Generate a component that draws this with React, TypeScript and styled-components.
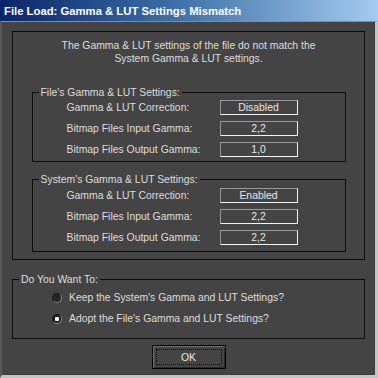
import React from "react";
import styled, { createGlobalStyle } from "styled-components";

const GlobalStyle = createGlobalStyle`
  html, body {
    margin: 0;
    padding: 0;
    background: #444444;
  }
  body {
    font-family: "Liberation Sans", Arial, sans-serif;
    font-size: 10.4px;
    color: #dedede;
  }
`;

const Window = styled.div`
  width: 378px;
  height: 378px;
  display: flex;
  flex-direction: column;
  background: #444444;
  overflow: hidden;
`;

const TitleBar = styled.div`
  height: 21px;
  flex: none;
  display: flex;
  align-items: center;
  padding-left: 4px;
  background: linear-gradient(to right, #0a246a 0%, #3a6ea5 45%, #a6caf0 100%);
  color: #ffffff;
  font-weight: bold;
  font-size: 11.3px;
`;

const Body = styled.div`
  flex: 1;
  display: flex;
  flex-direction: column;
  align-items: flex-start;
  padding: 9px 10px 4px 10px;
  border-top: 1px solid #8a8a8a;
  border-left: 2px solid #585858;
  border-right: 3px solid #c4c4c4;
  border-bottom: 3px solid #c4c4c4;
  box-shadow: inset -1px -1px 0 #3a3a3a;
`;

const Panel = styled.div<{ $height: number }>`
  position: relative;
  width: 353px;
  height: ${({ $height }) => $height}px;
  box-sizing: border-box;
  border: 1px solid #0c0c0c;
  display: flex;
  flex-direction: column;
  align-items: center;
`;

const Caption = styled.span`
  position: absolute;
  top: -7px;
  left: 6px;
  padding: 0 2px;
  line-height: 13px;
  background: #444444;
  color: #dedede;
  white-space: nowrap;
`;

const Message = styled.p`
  margin: 7px 0 27px 0;
  line-height: 13px;
  text-align: center;
`;

const Group = styled.div<{ $padTop: number; $padBottom: number }>`
  position: relative;
  width: 314px;
  box-sizing: border-box;
  border: 1px solid #0c0c0c;
  padding: ${({ $padTop, $padBottom }) => `${$padTop}px 0 ${$padBottom}px 34px`};
  display: grid;
  grid-template-columns: 153px 78px;
  row-gap: 6px;
  margin-bottom: 17px;
  &:last-of-type {
    margin-bottom: 0;
  }
`;

const Label = styled.span`
  line-height: 15px;
  white-space: nowrap;
`;

const Value = styled.span`
  height: 15px;
  box-sizing: border-box;
  border-top: 1px solid #9a9a9a;
  border-left: 1px solid #9a9a9a;
  border-right: 1px solid #f4f4f4;
  border-bottom: 1px solid #f4f4f4;
  text-align: center;
  line-height: 13px;
  color: #e8e8e8;
`;

const Choices = styled.div`
  margin-top: 19px;
  width: 353px;
  height: 60px;
  box-sizing: border-box;
  position: relative;
  border: 1px solid #0c0c0c;
  padding: 11px 0 0 39px;
  display: flex;
  flex-direction: column;
  gap: 8px;
`;

const Option = styled.label`
  display: flex;
  align-items: center;
  gap: 7px;
  line-height: 13px;
  white-space: nowrap;
`;

const Radio = styled.span<{ $checked?: boolean }>`
  width: 10px;
  height: 10px;
  box-sizing: border-box;
  border-radius: 50%;
  background: ${({ $checked }) =>
    $checked
      ? "radial-gradient(circle, #f2f2f2 0 2px, #1e1e1e 2.5px 100%)"
      : "#262626"};
  border: 1px solid;
  border-color: #1a1a1a #8a8a8a #8a8a8a #1a1a1a;
`;

const ButtonRow = styled.div`
  width: 353px;
  display: flex;
  justify-content: center;
  margin-top: 6px;
`;

const OkButton = styled.button`
  position: relative;
  width: 74px;
  height: 24px;
  box-sizing: border-box;
  background: #444444;
  border: 1px solid #000000;
  box-shadow: inset 1px 1px 0 #6e6e6e, inset -1px -1px 0 #2a2a2a;
  color: #e8e8e8;
  font-family: inherit;
  font-size: 10.4px;
  padding: 0;
  &::after {
    content: "";
    position: absolute;
    inset: 3px;
    border: 1px dotted #0a0a0a;
  }
`;

const fileRows = [
  ["Gamma & LUT Correction:", "Disabled"],
  ["Bitmap Files Input Gamma:", "2,2"],
  ["Bitmap Files Output Gamma:", "1,0"],
];

const systemRows = [
  ["Gamma & LUT Correction:", "Enabled"],
  ["Bitmap Files Input Gamma:", "2,2"],
  ["Bitmap Files Output Gamma:", "2,2"],
];

const SettingsGroup: React.FC<{
  title: string;
  rows: string[][];
  padTop: number;
  padBottom: number;
}> = ({ title, rows, padTop, padBottom }) => (
  <Group $padTop={padTop} $padBottom={padBottom}>
    <Caption>{title}</Caption>
    {rows.map(([label, value]) => (
      <React.Fragment key={label}>
        <Label>{label}</Label>
        <Value>{value}</Value>
      </React.Fragment>
    ))}
  </Group>
);

export default function App() {
  return (
    <>
      <GlobalStyle />
      <Window>
        <TitleBar>File Load: Gamma &amp; LUT Settings Mismatch</TitleBar>
        <Body>
          <Panel $height={229}>
            <Message>
              The Gamma &amp; LUT settings of the file do not match the
              <br />
              System Gamma &amp; LUT settings.
            </Message>
            <SettingsGroup
              title="File's Gamma & LUT Settings:"
              rows={fileRows}
              padTop={7}
              padBottom={4}
            />
            <SettingsGroup
              title="System's Gamma & LUT Settings:"
              rows={systemRows}
              padTop={8}
              padBottom={6}
            />
          </Panel>
          <Choices>
            <Caption>Do You Want To:</Caption>
            <Option>
              <Radio />
              Keep the System's Gamma and LUT Settings?
            </Option>
            <Option>
              <Radio $checked />
              Adopt the File's Gamma and LUT Settings?
            </Option>
          </Choices>
          <ButtonRow>
            <OkButton>OK</OkButton>
          </ButtonRow>
        </Body>
      </Window>
    </>
  );
}
